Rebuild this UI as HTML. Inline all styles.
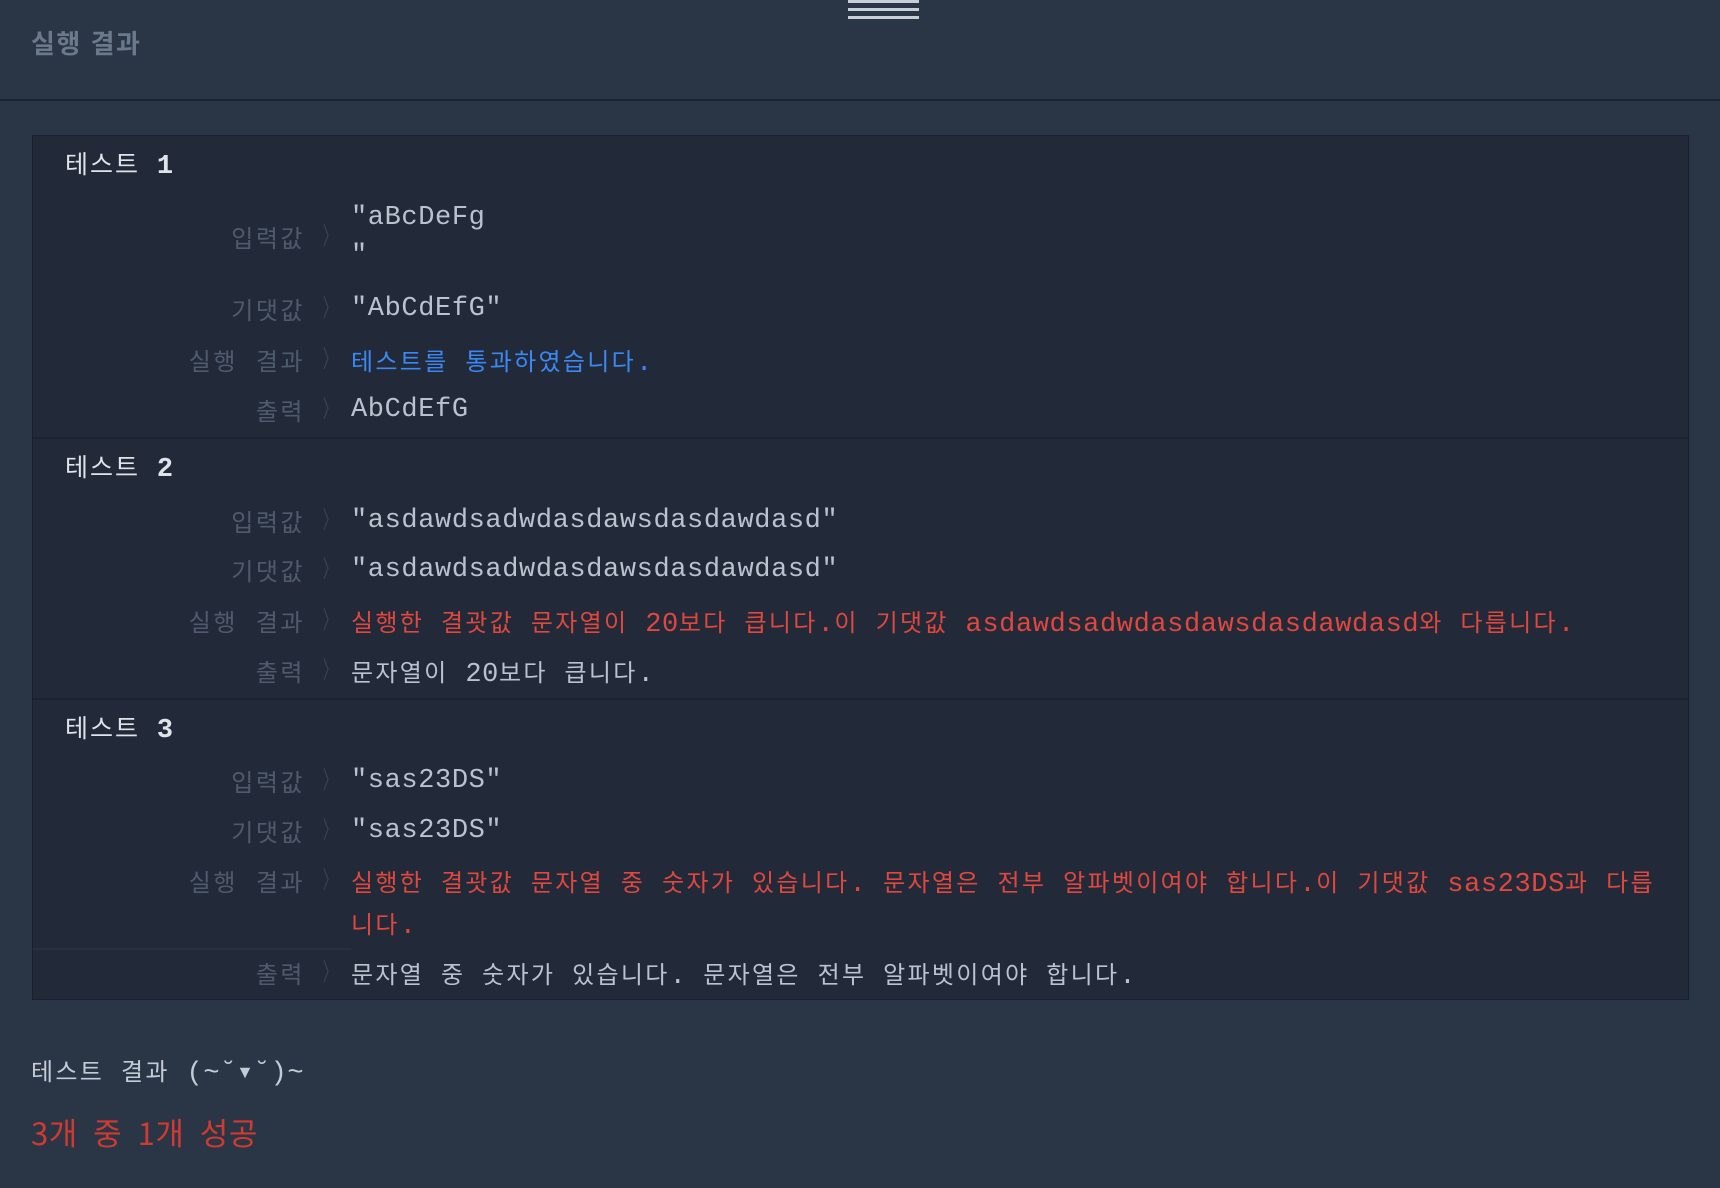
<!DOCTYPE html>
<html><head><meta charset="utf-8"><style>
*{margin:0;padding:0;box-sizing:border-box}
body{width:1720px;height:1188px;background:#2a3546;position:relative;overflow:hidden;font-family:"Liberation Mono","Noto Sans CJK KR",monospace;}
.a{position:absolute;white-space:nowrap;height:30px;line-height:30px}
.hdr{position:absolute;left:0;top:0;width:1720px;height:101px;border-bottom:2px solid #1c2431;background:#2a3546}
.ham{position:absolute;left:848px;width:71px;height:3px;background:#c8ced6}
.title{left:31px;top:29px;font-family:"Liberation Sans","Noto Sans CJK KR",sans-serif;font-size:26px;font-weight:bold;color:#6a798b;letter-spacing:1.5px}
.box{position:absolute;left:32px;top:135px;width:1657px;height:865px;background:#222a3a;border:1px solid #1a212d}
.sep{position:absolute;height:2px;background:#1b2230}
.th{left:65px;font-size:27px;color:#dfe4ea;font-weight:bold;letter-spacing:0.6px}
.th .k{font-size:25px;letter-spacing:2px;font-weight:normal}
.lb{right:1415px;font-family:"Noto Sans CJK KR",sans-serif;font-size:24px;color:#4f5b6c;text-align:right;letter-spacing:2.5px;word-spacing:10px}
.ch{left:318px;font-family:"Liberation Sans",sans-serif;font-size:24px;color:#3a4456;transform:scaleX(0.6)}
.v{left:351px;font-size:27px;letter-spacing:0.6px;color:#b9c2ce}
.k{font-family:"Noto Sans CJK KR",sans-serif;font-size:24px;letter-spacing:2.3px}
.r{color:#e0473d}.b{color:#3b88f5}
</style></head><body>
<div class="hdr"></div>
<div class="ham" style="top:0"></div><div class="ham" style="top:8px"></div><div class="ham" style="top:16px"></div>
<div class="a title">실행 결과</div>
<div class="box"></div>
<div class="sep" style="left:33px;width:1655px;top:437px"></div>
<div class="sep" style="left:33px;width:1655px;top:698px"></div>
<div class="sep" style="left:33px;width:318px;top:948px;background:#28313f"></div>

<div class="a th" style="top:148px"><span class="k">테스트</span> 1</div>
<div class="a lb" style="top:222px">입력값</div><div class="a ch" style="top:222px">〉</div>
<div class="a v" style="top:203px">"aBcDeFg</div>
<div class="a v" style="top:241px">"</div>
<div class="a lb" style="top:294px">기댓값</div><div class="a ch" style="top:294px">〉</div>
<div class="a v" style="top:294px">"AbCdEfG"</div>
<div class="a lb" style="top:345px">실행 결과</div><div class="a ch" style="top:345px">〉</div>
<div class="a v b" style="top:345px"><span class="k">테스트를</span> <span class="k">통과하였습니다</span>.</div>
<div class="a lb" style="top:395px">출력</div><div class="a ch" style="top:395px">〉</div>
<div class="a v" style="top:395px">AbCdEfG</div>

<div class="a th" style="top:451px"><span class="k">테스트</span> 2</div>
<div class="a lb" style="top:506px">입력값</div><div class="a ch" style="top:506px">〉</div>
<div class="a v" style="top:506px">"asdawdsadwdasdawsdasdawdasd"</div>
<div class="a lb" style="top:555px">기댓값</div><div class="a ch" style="top:555px">〉</div>
<div class="a v" style="top:555px">"asdawdsadwdasdawsdasdawdasd"</div>
<div class="a lb" style="top:606px">실행 결과</div><div class="a ch" style="top:606px">〉</div>
<div class="a v r" style="top:606px"><span class="k">실행한</span> <span class="k">결괏값</span> <span class="k">문자열이</span> 20<span class="k">보다</span> <span class="k">큽니다</span>.<span class="k">이</span> <span class="k">기댓값</span> asdawdsadwdasdawsdasdawdasd<span class="k">와</span> <span class="k">다릅니다</span>.</div>
<div class="a lb" style="top:656px">출력</div><div class="a ch" style="top:656px">〉</div>
<div class="a v" style="top:656px"><span class="k">문자열이</span> 20<span class="k">보다</span> <span class="k">큽니다</span>.</div>

<div class="a th" style="top:712px"><span class="k">테스트</span> 3</div>
<div class="a lb" style="top:766px">입력값</div><div class="a ch" style="top:766px">〉</div>
<div class="a v" style="top:766px">"sas23DS"</div>
<div class="a lb" style="top:816px">기댓값</div><div class="a ch" style="top:816px">〉</div>
<div class="a v" style="top:816px">"sas23DS"</div>
<div class="a lb" style="top:866px">실행 결과</div><div class="a ch" style="top:866px">〉</div>
<div class="a v r" style="top:866px"><span class="k">실행한</span> <span class="k">결괏값</span> <span class="k">문자열</span> <span class="k">중</span> <span class="k">숫자가</span> <span class="k">있습니다</span>. <span class="k">문자열은</span> <span class="k">전부</span> <span class="k">알파벳이여야</span> <span class="k">합니다</span>.<span class="k">이</span> <span class="k">기댓값</span> sas23DS<span class="k">과</span> <span class="k">다릅</span></div>
<div class="a v r" style="top:908px"><span class="k">니다</span>.</div>
<div class="a lb" style="top:958px">출력</div><div class="a ch" style="top:958px">〉</div>
<div class="a v" style="top:958px"><span class="k">문자열</span> <span class="k">중</span> <span class="k">숫자가</span> <span class="k">있습니다</span>. <span class="k">문자열은</span> <span class="k">전부</span> <span class="k">알파벳이여야</span> <span class="k">합니다</span>.</div>

<div class="a" style="left:31px;top:1055px;font-size:27px;color:#c3cbd5;letter-spacing:0.6px"><span class="k">테스트</span> <span class="k">결과</span> (~˘▾˘)~</div>
<div class="a" style="left:31px;top:1114px;height:36px;line-height:36px;font-family:'Noto Sans CJK KR',sans-serif;font-size:31px;color:#cf3b31;letter-spacing:0.5px;word-spacing:8px">3개 중 1개 성공</div>
</body></html>
